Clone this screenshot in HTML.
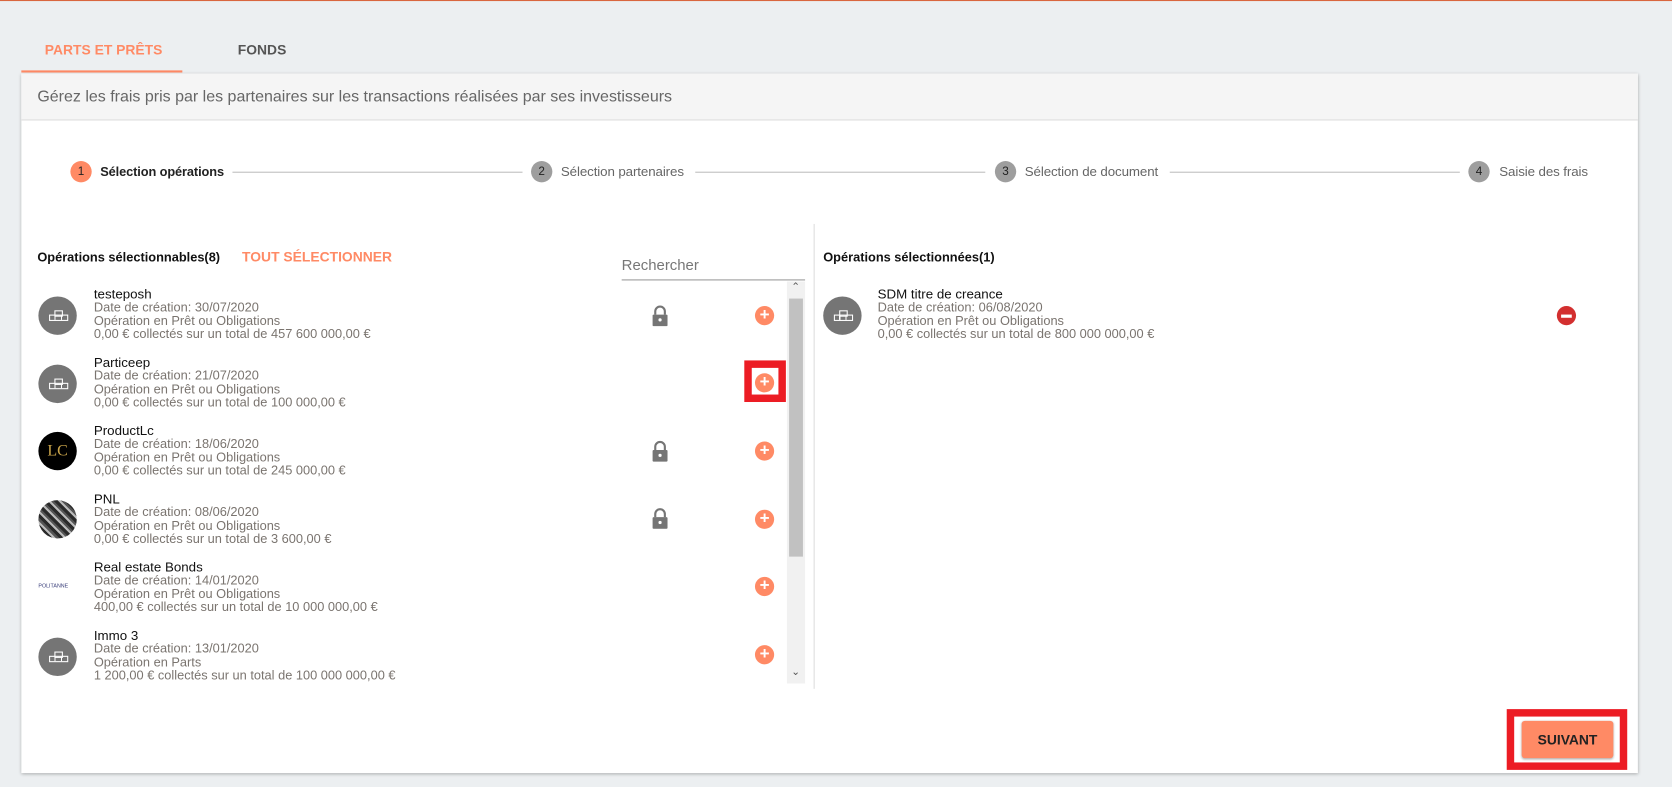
<!DOCTYPE html>
<html><head><meta charset="utf-8">
<style>
*{margin:0;padding:0;box-sizing:border-box}
html,body{width:1672px;height:787px;overflow:hidden;background:#eceff1;font-family:"Liberation Sans",sans-serif}
#w{position:absolute;left:0;top:0;width:1568px;height:738px;transform:scale(1.06633);transform-origin:0 0}
.a{position:absolute}
.topline{left:0;top:0;width:1568px;height:1px;background:#d9663f}
.tab{font-size:13px;font-weight:bold;top:39px}
.card{left:20px;top:69px;width:1516px;height:656px;background:#fff;box-shadow:0 1px 3px rgba(0,0,0,.3)}
.hdr{left:0;top:0;width:1516px;height:44px;background:#f5f5f5;border-bottom:1px solid #ddd;font-size:15px;color:#666;padding:13px 15px}
.st{width:20px;height:20px;border-radius:50%;font-size:11px;text-align:center;line-height:20px;top:82px;color:#222;background:#9e9e9e}
.sl{top:85px;font-size:12.5px;color:#666;letter-spacing:-0.1px}
.ln{top:92px;height:1px;background:#bdbdbd}
.t{font-size:12px;line-height:12.3px;color:#222}
.t div{color:#7a746f}
.t b{font-weight:normal;color:#111;font-size:12.5px}
.av{width:36px;height:36px;border-radius:50%;background:#757575}
.av i{position:absolute;left:10px;top:16px;width:16px;height:5px}
.av i:before{content:"";position:absolute;left:5px;top:-3px;width:6px;height:4px;border:1px solid #fff}
.av i:after{content:"";position:absolute;left:0;top:1px;width:16px;height:4px;border:1px solid #fff;background:linear-gradient(90deg,transparent 4px,#fff 4px 5px,transparent 5px 10px,#fff 10px 11px,transparent 11px)}
.plus{width:18px;height:18px;border-radius:50%;background:#ff8a65;color:#fff;font-size:16px;line-height:18px;text-align:center;font-weight:bold}
</style></head><body><div id="w">
<div class="a topline"></div>
<div class="a tab" style="left:42px;color:#ff8a65">PARTS ET PRÊTS</div>
<div class="a tab" style="left:223px;color:#555">FONDS</div>
<div class="a" style="left:20px;top:66px;width:151px;height:2px;background:#ff8a65"></div>
<div class="a card">
<div class="a hdr">Gérez les frais pris par les partenaires sur les transactions réalisées par ses investisseurs</div>
<div class="a st" style="left:46px;background:#ff8a65">1</div>
<div class="a sl" style="left:74px;color:#222;font-weight:bold;font-size:12px">Sélection opérations</div>
<div class="a ln" style="left:198px;width:272px"></div>
<div class="a st" style="left:478px">2</div>
<div class="a sl" style="left:506px">Sélection partenaires</div>
<div class="a ln" style="left:632px;width:272px"></div>
<div class="a st" style="left:913px">3</div>
<div class="a sl" style="left:941px">Sélection de document</div>
<div class="a ln" style="left:1077px;width:272px"></div>
<div class="a st" style="left:1357px">4</div>
<div class="a sl" style="left:1386px">Saisie des frais</div>

<div class="a" style="left:15px;top:165px;font-size:12px;font-weight:bold;color:#111">Opérations sélectionnables(8)</div>
<div class="a" style="left:207px;top:164px;font-size:13px;font-weight:bold;color:#ff8a65">TOUT SÉLECTIONNER</div>
<div class="a" style="left:563px;top:171px;font-size:14px;color:#777">Rechercher</div>
<div class="a" style="left:563px;top:193px;width:172px;height:1px;background:#999"></div>
<div class="a" style="left:718px;top:195px;width:17px;height:377px;background:#f1f1f1"></div>
<div class="a" style="left:720px;top:211px;width:13px;height:242px;background:#c1c1c1"></div>
<div class="a" style="left:722px;top:195px;font-size:10px;color:#555">⌃</div>
<div class="a" style="left:722px;top:556px;font-size:10px;color:#555">⌄</div>
<div class="a" style="left:743px;top:141px;width:1px;height:436px;background:#ddd"></div>

<div class="a av" style="left:16px;top:209px"><i></i></div>
<div class="a t" style="left:68px;top:201px"><b>testeposh</b><div>Date de création: 30/07/2020</div><div>Opération en Prêt ou Obligations</div><div>0,00 € collectés sur un total de 457 600 000,00 €</div></div>
<div class="a av" style="left:16px;top:273px"><i></i></div>
<div class="a t" style="left:68px;top:265px"><b>Particeep</b><div>Date de création: 21/07/2020</div><div>Opération en Prêt ou Obligations</div><div>0,00 € collectés sur un total de 100 000,00 €</div></div>
<div class="a av" style="left:16px;top:336px;background:#000;color:#c9a44a;font-family:'Liberation Serif',serif;font-size:15px;text-align:center;line-height:36px">LC</div>
<div class="a t" style="left:68px;top:329px"><b>ProductLc</b><div>Date de création: 18/06/2020</div><div>Opération en Prêt ou Obligations</div><div>0,00 € collectés sur un total de 245 000,00 €</div></div>
<div class="a av" style="left:16px;top:400px;background:repeating-linear-gradient(45deg,#2a2a2a 0 3px,#bbb 3px 5px,#555 5px 7px)"></div>
<div class="a t" style="left:68px;top:393px"><b>PNL</b><div>Date de création: 08/06/2020</div><div>Opération en Prêt ou Obligations</div><div>0,00 € collectés sur un total de 3 600,00 €</div></div>
<div class="a" style="left:16px;top:478px;font-size:5px;color:#3a3f7a">POLITANNE</div>
<div class="a t" style="left:68px;top:457px"><b>Real estate Bonds</b><div>Date de création: 14/01/2020</div><div>Opération en Prêt ou Obligations</div><div>400,00 € collectés sur un total de 10 000 000,00 €</div></div>
<div class="a av" style="left:16px;top:529px"><i></i></div>
<div class="a t" style="left:68px;top:521px"><b>Immo 3</b><div>Date de création: 13/01/2020</div><div>Opération en Parts</div><div>1 200,00 € collectés sur un total de 100 000 000,00 €</div></div>

<svg class="a" style="left:591px;top:217px" width="16" height="20" viewBox="0 0 16 20"><path d="M3.5 9V6a4.5 4.5 0 0 1 9 0v3" fill="none" stroke="#757575" stroke-width="2"/><rect x="1" y="9" width="14" height="11" rx="1" fill="#757575"/><circle cx="8" cy="14" r="1.5" fill="#fff"/></svg>
<svg class="a" style="left:591px;top:344px" width="16" height="20" viewBox="0 0 16 20"><path d="M3.5 9V6a4.5 4.5 0 0 1 9 0v3" fill="none" stroke="#757575" stroke-width="2"/><rect x="1" y="9" width="14" height="11" rx="1" fill="#757575"/><circle cx="8" cy="14" r="1.5" fill="#fff"/></svg>
<svg class="a" style="left:591px;top:407px" width="16" height="20" viewBox="0 0 16 20"><path d="M3.5 9V6a4.5 4.5 0 0 1 9 0v3" fill="none" stroke="#757575" stroke-width="2"/><rect x="1" y="9" width="14" height="11" rx="1" fill="#757575"/><circle cx="8" cy="14" r="1.5" fill="#fff"/></svg>
<div class="a plus" style="left:688px;top:218px">+</div>
<div class="a" style="left:678px;top:269px;width:39px;height:39px;background:#ec1c24"></div>
<div class="a" style="left:685px;top:276px;width:25px;height:25px;background:#fff"></div>
<div class="a plus" style="left:688px;top:281px">+</div>
<div class="a plus" style="left:688px;top:345px">+</div>
<div class="a plus" style="left:688px;top:409px">+</div>
<div class="a plus" style="left:688px;top:472px">+</div>
<div class="a plus" style="left:688px;top:536px">+</div>

<div class="a" style="left:752px;top:165px;font-size:12px;font-weight:bold;color:#111">Opérations sélectionnées(1)</div>
<div class="a av" style="left:752px;top:209px"><i></i></div>
<div class="a t" style="left:803px;top:201px"><b>SDM titre de creance</b><div>Date de création: 06/08/2020</div><div>Opération en Prêt ou Obligations</div><div>0,00 € collectés sur un total de 800 000 000,00 €</div></div>
<div class="a" style="left:1440px;top:218px;width:18px;height:18px;border-radius:50%;background:#d32f2f"><div class="a" style="left:4px;top:8px;width:10px;height:2.5px;background:#fff"></div></div>

<div class="a" style="left:1393px;top:596px;width:113px;height:57px;background:#ec1c24"></div>
<div class="a" style="left:1400px;top:603px;width:99px;height:43px;background:#fff"></div>
<div class="a" style="left:1407px;top:607px;width:86px;height:35px;background:#ff8a65;border-radius:3px;box-shadow:0 1px 2px rgba(0,0,0,.3);font-size:13px;font-weight:bold;color:#222;text-align:center;line-height:35px">SUIVANT</div>
</div>
</div></body></html>
